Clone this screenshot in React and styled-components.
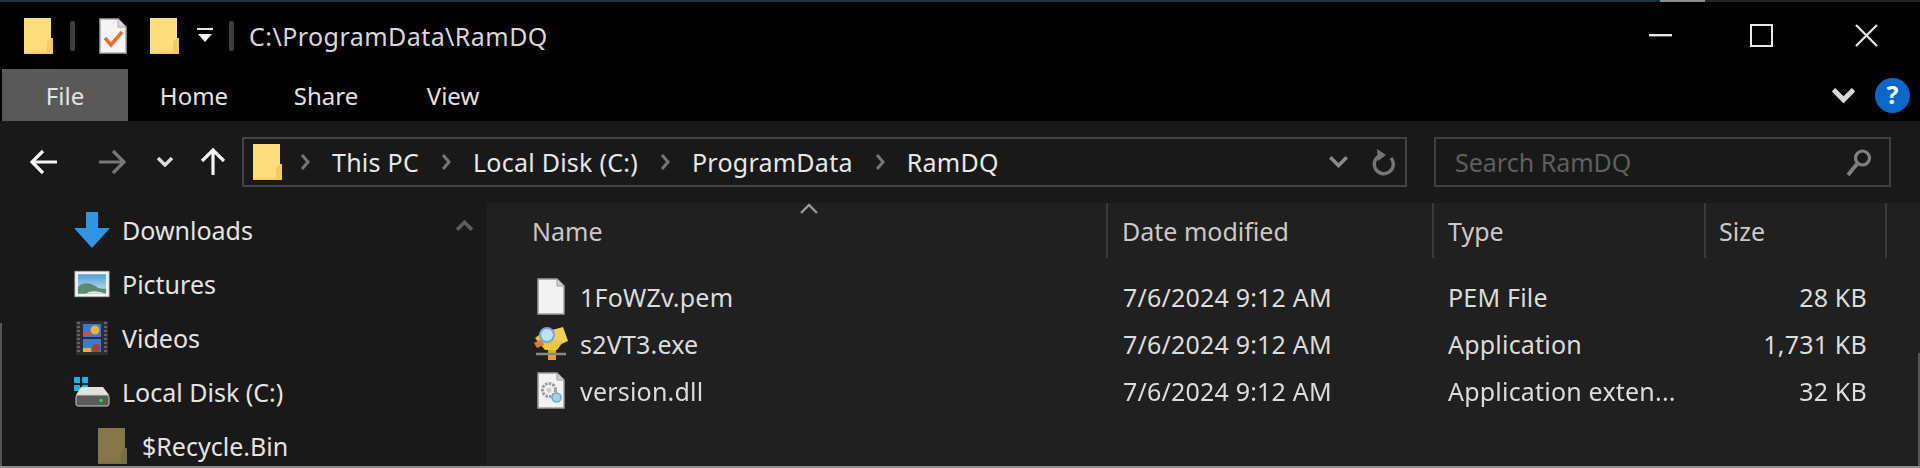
import React from "react";
import styled, { createGlobalStyle } from "styled-components";

const GlobalStyle = createGlobalStyle`
  html, body { margin: 0; padding: 0; background: #000; }
  body { font-family: "Noto Sans", "Open Sans", sans-serif; }
`;

const Window = styled.div`
  width: 1920px;
  height: 468px;
  overflow: hidden;
  display: flex;
  flex-direction: column;
  color: #e4e4e4;
  filter: blur(0.5px);
`;

const TopEdge = styled.div`
  height: 2px;
  flex: none;
  background: linear-gradient(
    to right,
    #17323a 0,
    #17323a 1660px,
    #8a8a8a 1660px,
    #8a8a8a 1705px,
    #222 1705px
  );
`;

const TitleBar = styled.div`
  height: 67px;
  flex: none;
  background: #000;
  display: flex;
  align-items: center;
  padding-left: 24px;
`;

const QuickSlot = styled.div`
  display: flex;
  margin-left: ${(p) => p.$ml || 0}px;
`;

const TitleSep = styled.div`
  width: 5px;
  height: 30px;
  border-radius: 2px;
  background: #3c3c3c;
  margin-left: ${(p) => p.$ml}px;
`;

const TitleText = styled.div`
  font-size: 25px;
  letter-spacing: 0.45px;
  color: #d8d8d8;
  margin-left: 15px;
`;

const WindowButtons = styled.div`
  margin-left: auto;
  display: flex;
  align-items: center;
  padding-right: 1px;
`;

const WindowButton = styled.div`
  width: ${(p) => p.$w}px;
  display: flex;
  justify-content: center;
  align-items: center;
`;

const RibbonTabs = styled.div`
  height: 52px;
  flex: none;
  background: #000;
  display: flex;
  align-items: stretch;
  padding-left: 2px;
`;

const Tab = styled.div`
  width: ${(p) => p.$w}px;
  display: flex;
  align-items: center;
  justify-content: center;
  font-size: 24px;
  color: #e2e2e2;
  background: ${(p) => (p.$active ? "#595959" : "transparent")};
`;

const RibbonEnd = styled.div`
  margin-left: auto;
  display: flex;
  align-items: center;
  gap: 20px;
  padding-right: 10px;
`;

const NavRow = styled.div`
  height: 82px;
  flex: none;
  background: #191919;
  display: flex;
  align-items: flex-start;
  padding: 16px 29px 0 30px;
  box-sizing: border-box;
`;

const NavButton = styled.div`
  display: flex;
  align-items: center;
  height: 50px;
  margin-left: ${(p) => p.$ml || 0}px;
`;

const AddressBox = styled.div`
  width: 1165px;
  height: 50px;
  margin-left: 15px;
  box-sizing: border-box;
  border: 2px solid #434343;
  display: flex;
  align-items: center;
  padding-left: 9px;
`;

const Crumb = styled.span`
  font-size: 25px;
  letter-spacing: 0.25px;
  color: #e8e8e8;
  margin-left: 22px;
`;

const CrumbArrow = styled.svg`
  margin-left: ${(p) => p.$ml}px;
  flex: none;
`;

const AddressEnd = styled.div`
  margin-left: auto;
  display: flex;
  align-items: center;
  padding-right: 10px;
  gap: 23px;
`;

const SearchBox = styled.div`
  width: 457px;
  height: 50px;
  margin-left: 27px;
  box-sizing: border-box;
  border: 2px solid #3f3f3f;
  display: flex;
  align-items: center;
  justify-content: space-between;
  padding: 0 17px 0 19px;
  font-size: 25px;
  color: #5f5f5f;
`;

const Body = styled.div`
  flex: 1;
  display: flex;
  min-height: 0;
`;

const Sidebar = styled.div`
  width: 487px;
  flex: none;
  position: relative;
  background: linear-gradient(#555, #555) left 120px / 2px 100% no-repeat, #191919;
  padding-left: 74px;
  box-sizing: border-box;
`;

const ScrollUp = styled.svg`
  position: absolute;
  left: 456px;
  top: 17px;
`;

const SideItem = styled.div`
  height: 54px;
  display: flex;
  align-items: center;
  gap: 12px;
  font-size: 25px;
  color: #e4e4e4;
  padding-left: ${(p) => (p.$indent ? 20 : 0)}px;
`;

const SideIcon = styled.div`
  width: 36px;
  display: flex;
  justify-content: center;
  flex: none;
`;

const Content = styled.div`
  flex: 1;
  background: linear-gradient(#555, #555) right 150px / 2px 100% no-repeat, #202020;
  display: flex;
  flex-direction: column;
`;

const HeaderRow = styled.div`
  height: 55px;
  flex: none;
  display: grid;
  grid-template-columns: 621px 326px 272px 181px;
  position: relative;
`;

const HeaderCell = styled.div`
  display: flex;
  align-items: center;
  font-size: 25px;
  color: #c9c9c9;
  padding-left: ${(p) => p.$pl}px;
  border-right: 2px solid #3a3a3a;
`;

const SortArrow = styled.svg`
  position: absolute;
  left: 313px;
  top: 0;
`;

const FileList = styled.div`
  padding-top: 15px;
  display: flex;
  flex-direction: column;
`;

const FileRow = styled.div`
  height: 47px;
  display: grid;
  grid-template-columns: 621px 326px 272px 181px;
  align-items: center;
  font-size: 25px;
  letter-spacing: 0.2px;
  color: #dcdcdc;
`;

const NameCell = styled.div`
  display: flex;
  align-items: center;
  padding-left: 46px;
  gap: 11px;
`;

const FileIconBox = styled.div`
  width: 36px;
  display: flex;
  justify-content: center;
  flex: none;
`;

const Cell = styled.div`
  padding-left: ${(p) => p.$pl || 0}px;
  padding-right: ${(p) => p.$pr || 0}px;
  text-align: ${(p) => p.$align || "left"};
  white-space: nowrap;
`;

const BottomEdge = styled.div`
  height: 2px;
  flex: none;
  background: #8e8e8e;
`;

function Folder({ w = 29, h = 36, dim }) {
  const body = dim ? "#857549" : "#ffdc7c";
  const fold = dim ? "#7a6c42" : "#f3ca62";
  return (
    <svg width={w} height={h} viewBox="0 0 29 36">
      <path d="M0 0H27V20H29V36H0Z" fill={body} />
      <path d="M23 24L27 20H29V36H23Z" fill={fold} />
      <path d="M0 36H29V34.5H0Z" fill={fold} />
    </svg>
  );
}

function TaskDoc() {
  return (
    <svg width="28" height="36" viewBox="0 0 28 36">
      <path d="M1 1H19L27 9V35H1Z" fill="#f4f4f4" stroke="#a8a8a8" strokeWidth="1.5" />
      <path d="M19 1V9H27" fill="#d8d8d8" stroke="#a8a8a8" strokeWidth="1" />
      <path d="M6 20L12 27L23 14" fill="none" stroke="#ef6b35" strokeWidth="3.5" />
    </svg>
  );
}

function BlankDoc({ gear }) {
  return (
    <svg width="28" height="37" viewBox="0 0 28 37">
      <path d="M1 1H20L27 8V36H1Z" fill="#f2f2f2" stroke="#9c9c9c" strokeWidth="1.5" />
      <path d="M20 1V8H27" fill="#cfcfcf" stroke="#9c9c9c" strokeWidth="1" />
      {gear && (
        <g>
          <circle cx="12" cy="18" r="6.5" fill="none" stroke="#9a9a9a" strokeWidth="3" strokeDasharray="2.5 1.2" />
          <circle cx="12" cy="18" r="2.5" fill="#cfcfcf" />
          <circle cx="19.5" cy="25.5" r="4.5" fill="#a9cfe6" stroke="#6fa6c9" strokeWidth="1.5" />
        </g>
      )}
    </svg>
  );
}

function ExeIcon() {
  return (
    <svg width="36" height="36" viewBox="0 0 36 36">
      <path d="M19 4L30 1L35 15L24 20H16Z" fill="#f4cf57" />
      <path d="M2 12L10 6L20 14L30 16L24 24H12Z" fill="#f0c53a" />
      <path d="M1 17L9 13L11 19L4 22Z" fill="#d77c3e" />
      <circle cx="14" cy="9" r="7" fill="#bfe2f7" stroke="#6fa8d8" strokeWidth="2" />
      <path d="M15 24H23V34H15Z" fill="#e0a52c" />
      <path d="M3 28H33" stroke="#888" strokeWidth="2.5" />
    </svg>
  );
}

function PicturesIcon() {
  return (
    <svg width="37" height="28" viewBox="0 0 37 28">
      <defs>
        <linearGradient id="sky" x1="0" y1="0" x2="0" y2="1">
          <stop offset="0" stopColor="#4f9fd6" />
          <stop offset="1" stopColor="#cfe6ef" />
        </linearGradient>
      </defs>
      <rect x="1" y="1" width="35" height="26" fill="#f4f4f4" stroke="#b5b5b5" />
      <rect x="4" y="4" width="29" height="20" fill="url(#sky)" />
      <path d="M4 17C10 11 18 13 25 18C28 19 31 19 33 19V24H4Z" fill="#5d8a76" />
      <path d="M12 24C17 20 25 21 33 24Z" fill="#dfe9ea" />
    </svg>
  );
}

function VideosIcon() {
  return (
    <svg width="32" height="34" viewBox="0 0 32 34">
      <rect width="32" height="34" fill="#2e2e2e" />
      <path d="M2.5 1V33M29.5 1V33" stroke="#666" strokeWidth="3" strokeDasharray="2 2" />
      <rect x="7" y="3" width="18" height="13" fill="#3c78d8" />
      <circle cx="19" cy="9" r="4.5" fill="#e8b23a" />
      <rect x="7" y="11" width="8" height="4" fill="#d84a4a" />
      <rect x="7" y="18" width="18" height="13" fill="#3c78d8" />
      <circle cx="20" cy="27" r="4" fill="#a5432f" />
      <rect x="7" y="27" width="8" height="4" fill="#e8b23a" />
    </svg>
  );
}

function DiskIcon() {
  return (
    <svg width="36" height="30" viewBox="0 0 36 30">
      <rect x="0" y="0" width="6" height="6" fill="#17b3ef" />
      <rect x="8" y="0" width="6" height="6" fill="#17b3ef" />
      <rect x="0" y="8" width="6" height="6" fill="#17b3ef" />
      <rect x="8" y="8" width="6" height="6" fill="#17b3ef" />
      <path d="M7 10H29L35 18H2Z" fill="#e2e2e2" />
      <rect x="2" y="18" width="33" height="11" rx="2" fill="#5a5a5a" stroke="#c9c9c9" />
      <circle cx="27" cy="23.5" r="1.8" fill="#35d04a" />
    </svg>
  );
}

function DownloadIcon() {
  return (
    <svg width="36" height="36" viewBox="0 0 36 36">
      <path d="M12 0H24V16H36L18 36L0 16H12Z" fill="#2f96e4" />
    </svg>
  );
}

function Arrow({ dir, color = "#f4f4f4" }) {
  const rotate = { left: 180, right: 0, up: -90 }[dir];
  return (
    <svg width="28" height="28" viewBox="0 0 28 28">
      <path
        transform={`rotate(${rotate} 14 14)`}
        d="M1 14H26M15 3L26 14L15 25"
        fill="none"
        stroke={color}
        strokeWidth="3.2"
      />
    </svg>
  );
}

function Chevron({ w = 16, h = 10, color = "#d0d0d0", sw = 3 }) {
  return (
    <svg width={w} height={h} viewBox="0 0 16 10">
      <path d="M1 1L8 8L15 1" fill="none" stroke={color} strokeWidth={sw} />
    </svg>
  );
}

function Sep({ first }) {
  return (
    <CrumbArrow $ml={first ? 18 : 22} width="10" height="16" viewBox="0 0 10 16">
      <path d="M2 1L8 8L2 15" fill="none" stroke="#767676" strokeWidth="3" />
    </CrumbArrow>
  );
}

const files = [
  { name: "1FoWZv.pem", type: "PEM File", size: "28 KB", icon: <BlankDoc /> },
  { name: "s2VT3.exe", type: "Application", size: "1,731 KB", icon: <ExeIcon /> },
  { name: "version.dll", type: "Application exten...", size: "32 KB", icon: <BlankDoc gear /> },
];

export default function App() {
  return (
    <Window>
      <GlobalStyle />
      <TopEdge />
      <TitleBar>
        <Folder />
        <TitleSep $ml={17} />
        <QuickSlot $ml={24}>
          <TaskDoc />
        </QuickSlot>
        <QuickSlot $ml={23}>
          <Folder />
        </QuickSlot>
        <QuickSlot $ml={18}>
          <svg width="16" height="15" viewBox="0 0 16 15">
            <rect width="16" height="2" fill="#e6e6e6" />
            <path d="M1 6H15L8 14Z" fill="#f4f4f4" />
          </svg>
        </QuickSlot>
        <TitleSep $ml={16} />
        <TitleText>C:\ProgramData\RamDQ</TitleText>
        <WindowButtons>
          <WindowButton $w={98}>
            <svg width="23" height="3" viewBox="0 0 23 3">
              <rect width="23" height="2.4" fill="#e8e8e8" />
            </svg>
          </WindowButton>
          <WindowButton $w={105}>
            <svg width="23" height="23" viewBox="0 0 23 23">
              <rect x="1" y="1" width="21" height="21" fill="none" stroke="#e8e8e8" strokeWidth="2" />
            </svg>
          </WindowButton>
          <WindowButton $w={105}>
            <svg width="23" height="23" viewBox="0 0 23 23">
              <path d="M1 1L22 22M22 1L1 22" stroke="#e8e8e8" strokeWidth="2.2" />
            </svg>
          </WindowButton>
        </WindowButtons>
      </TitleBar>

      <RibbonTabs>
        <Tab $active $w={126}>File</Tab>
        <Tab $w={132}>Home</Tab>
        <Tab $w={132}>Share</Tab>
        <Tab $w={122}>View</Tab>
        <RibbonEnd>
          <Chevron w={23} h={15} sw={3.5} color="#d8d8d8" />
          <svg width="35" height="35" viewBox="0 0 35 35">
            <circle cx="17.5" cy="17.5" r="17.5" fill="#0a66c8" />
            <text x="17.5" y="26" textAnchor="middle" fontSize="25" fontWeight="700" fontFamily="Noto Sans" fill="#f2f6fb">?</text>
          </svg>
        </RibbonEnd>
      </RibbonTabs>

      <NavRow>
        <NavButton><Arrow dir="left" /></NavButton>
        <NavButton $ml={40}><Arrow dir="right" color="#777" /></NavButton>
        <NavButton $ml={31}><Chevron sw={3.4} color="#dcdcdc" /></NavButton>
        <NavButton $ml={26}><Arrow dir="up" /></NavButton>
        <AddressBox>
          <Folder />
          <Sep first />
          <Crumb>This PC</Crumb>
          <Sep />
          <Crumb>Local Disk (C:)</Crumb>
          <Sep />
          <Crumb>ProgramData</Crumb>
          <Sep />
          <Crumb>RamDQ</Crumb>
          <AddressEnd>
            <Chevron w={19} h={12} color="#8a8a8a" sw={3} />
            <svg width="24" height="27" viewBox="0 0 24 27">
              <path d="M20 9A9.5 9.5 0 1 1 9 6.5" fill="none" stroke="#767676" strokeWidth="3.4" />
              <path d="M6 0L15 6L7 12Z" fill="#767676" />
            </svg>
          </AddressEnd>
        </AddressBox>
        <SearchBox>
          <span>Search RamDQ</span>
          <svg width="26" height="29" viewBox="0 0 26 29">
            <circle cx="16.5" cy="10" r="7" fill="none" stroke="#808080" strokeWidth="3.2" />
            <path d="M11 16L2 27" stroke="#808080" strokeWidth="3.8" />
          </svg>
        </SearchBox>
      </NavRow>

      <Body>
        <Sidebar>
          <ScrollUp width="17" height="11" viewBox="0 0 16 10">
            <path d="M1 9L8 2L15 9" fill="none" stroke="#5e5e5e" strokeWidth="3.4" />
          </ScrollUp>
          <SideItem><SideIcon><DownloadIcon /></SideIcon>Downloads</SideItem>
          <SideItem><SideIcon><PicturesIcon /></SideIcon>Pictures</SideItem>
          <SideItem><SideIcon><VideosIcon /></SideIcon>Videos</SideItem>
          <SideItem><SideIcon><DiskIcon /></SideIcon>Local Disk (C:)</SideItem>
          <SideItem $indent><SideIcon><Folder dim /></SideIcon>$Recycle.Bin</SideItem>
        </Sidebar>
        <Content>
          <HeaderRow>
            <SortArrow width="18" height="11" viewBox="0 0 18 11">
              <path d="M1 10L9 2L17 10" fill="none" stroke="#9a9a9a" strokeWidth="2.4" />
            </SortArrow>
            <HeaderCell $pl={45}>Name</HeaderCell>
            <HeaderCell $pl={14}>Date modified</HeaderCell>
            <HeaderCell $pl={14}>Type</HeaderCell>
            <HeaderCell $pl={13}>Size</HeaderCell>
          </HeaderRow>
          <FileList>
            {files.map((f) => (
              <FileRow key={f.name}>
                <NameCell>
                  <FileIconBox>{f.icon}</FileIconBox>
                  {f.name}
                </NameCell>
                <Cell $pl={15}>7/6/2024 9:12 AM</Cell>
                <Cell $pl={14}>{f.type}</Cell>
                <Cell $align="right" $pr={20}>{f.size}</Cell>
              </FileRow>
            ))}
          </FileList>
        </Content>
      </Body>
      <BottomEdge />
    </Window>
  );
}
